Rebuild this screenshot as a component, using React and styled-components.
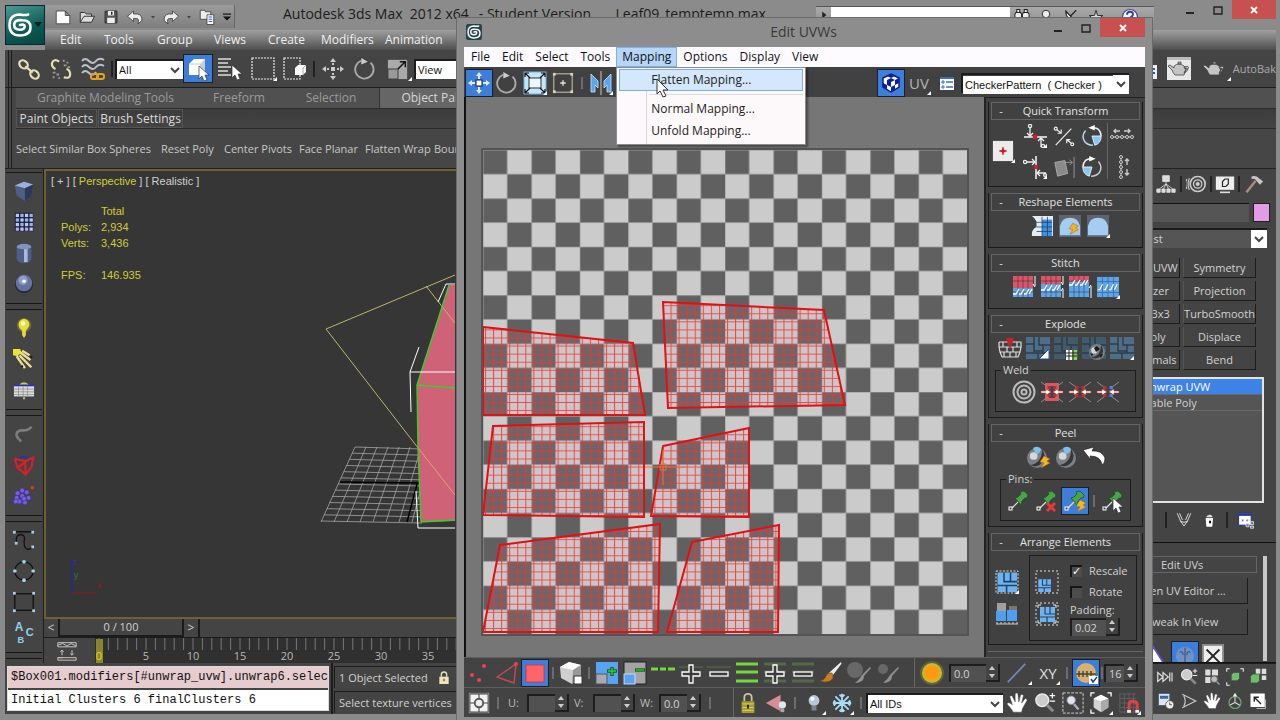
import React from "react";
import styled, { createGlobalStyle, css } from "styled-components";

const GlobalStyle = createGlobalStyle`
    * {
        box-sizing: border-box;
    }

    body {
        margin: 0;
        overflow: hidden;
        background: #8b8b8b;
        font-family: "Open Sans", "Noto Sans", sans-serif;
        font-size: 12px;
        line-height: 16px;
        color: #d2d2d2;
    }

    button, input, select {
        font: inherit;
        color: inherit;
        margin: 0;
        padding: 0;
        border: none;
        border-radius: 0;
        background: none;
    }
`;

/* ---------- drawings ---------- */

const tile = (x, y, s, c) => <rect x={x} y={y} width={s} height={s} fill={c} />;

const stitchRows = (top, split) => <>
    <rect x="1" y="1" width="20" height={split} fill="#d8566a" />
    <rect x="1" y={1 + split} width="20" height={21 - split} fill="#5fa4e6" />
    <path d="M1 6H21M1 17H21M6 1V22M11 1V22M16 1V22" stroke="#00000055" fill="none" />
    <path d={`M1 ${top + 6}h3l3-5M7 ${top + 6}h2l3-5M12 ${top + 6}h2l3-5M17 ${top + 6}l3-5`} stroke="#fff" strokeWidth="1.3" fill="none" />
</>;

const bricks = c => <>
    <rect x="0" y="1" width="24" height="22" fill={c} />
    <path d="M8 1V15H17M13 1V9H24M17 9V17M0 17H24M8 8H0M12 17V23" stroke="#2c3c48" strokeWidth="1.4" fill="none" />
</>;

const elements = <>
    <rect x="5" y="5" width="15" height="15" fill="#6fb3ee" />
    <path d="M10 5V12H20M15 5V12M5 15H20M12 15V20" stroke="#1d4468" strokeWidth="1.2" fill="none" />
</>;

const ball = (cx, cy, r) => <>
    <circle cx={cx} cy={cy} r={r} fill="#7c8084" />
    <path d={`M${cx + r * .5} ${cy - r * .86}A${r} ${r} 0 0 1 ${cx - r * .7} ${cy + r * .7}Q${cx + r * .5} ${cy + r * .5} ${cx + r * .5} ${cy - r * .86}`} fill="#33363a" />
    <circle cx={cx - r / 3} cy={cy - r / 5} r={r / 2.6} fill="#d4d8dc" />
</>;

const bolt = (x, y) => <path transform={`translate(${x} ${y})`} d="M5 0L11 3L8 5L11 7L2 12L5 7L1 6Z" fill="#f2b42c" stroke="#a8690c" strokeWidth=".6" />;

const pin = <>
    <path d="M5 19L12 12" stroke="#ddd" strokeWidth="1.2" />
    <path d="M8 9L11 8L14 5L13 3L17 2L21 6L20 9L18 9L15 12L14 16Z" fill="#49a349" stroke="#1c541c" strokeWidth=".8" />
    <rect x="2" y="18" width="3" height="3" fill="#444" stroke="#fff" />
</>;

const pointer = (x, y) => <path transform={`translate(${x} ${y})`} d="M0 0V13L3 10L5 15L8 14L6 9H10Z" fill="#fff" stroke="#333" strokeWidth=".7" />;

const weldArrows = c => <>
    <path d="M1 2L8 7V17L1 22M23 2L16 7V17L23 22" stroke="#8b8b8b" fill="none" />
    <path d="M9 6V18" stroke="#d8232f" strokeWidth="3" strokeDasharray="3 1" />
    <path d="M15 6V18" stroke={c} strokeWidth="3" strokeDasharray="3 1" />
    <path d="M1 11H6V9L11 12L6 15V13H1ZM23 11H18V9L13 12L18 15V13H23Z" fill="#fff" stroke="#a33" strokeWidth=".6" />
</>;

const plusBox = <path d="M10 4h4v7h7v4h-7v7h-4v-7H3v-4h7z" fill="#3c3c3c" stroke="#fff" strokeWidth="1.3" />;
const minusBox = <rect x="3" y="11" width="18" height="4" fill="#3c3c3c" stroke="#fff" strokeWidth="1.3" />;

const teapot = <path d="M7 9Q12 5 17 9Q20 12 17 18H8Q6 16 5 13L1 9L3 8L7 11ZM11 5h3v2h-3zM17 10Q23 8 21 12Q20 15 17 16L18 14Q21 12 20 11L18 12Z" fill="#c4c4c4" stroke="#444" strokeWidth=".8" />;

const blob = (x, y, r, c) => <circle cx={x} cy={y} r={r} fill={c} />;

const glyphs = {
    swirl: <path d="M19 3Q16 4 12 3Q3 3 3 12Q3 21 12 21Q21 21 21 14Q21 8 14 8Q7 7 7 12Q7 16 12 16Q16 16 16 13Q16 11 12 12" fill="none" stroke="#fff" strokeWidth="2.2" strokeLinecap="round" />,
    page: <path d="M3 4H15L21 10V21H3ZM15 4V10H21" fill="#fff" stroke="#333" />,
    folder: <path d="M3 19V6H9L11 8H18V11M3 19L8 11H22L18 19Z" fill="#ddd" stroke="#333" strokeWidth="1.3" />,
    save: <><path d="M4 4H20V20H4Z" fill="#555" stroke="#222" /><path d="M8 4h8v6H8zM7 13h10v7H7z" fill="#eee" /><path d="M13 5v4" stroke="#222" strokeWidth="2" /></>,
    undo: <path d="M2 11L10 4V8H15Q22 9 21 17L16 21Q18 14 14 14H10V18Z" fill="#eee" stroke="#333" />,
    redo: <path d="M22 11L14 4V8H9Q2 9 3 17L8 21Q6 14 10 14H14V18Z" fill="#eee" stroke="#333" />,
    project: <><path d="M3 3H9L10 5H17V15H3Z" fill="#eee" stroke="#333" /><path d="M12 9H21V22H12Z" fill="#fff" stroke="#333" /><path d="M14 12h5M14 15h5M14 18h5" stroke="#2f6fc0" strokeWidth="1.5" /></>,
    caret: <path d="M8 10H16L12 15Z" fill="#444" />,
    caretRight: <path d="M9 6L16 12L9 18Z" fill="#222" />,
    caretBar: <><path d="M5 7H19" stroke="#111" strokeWidth="2" /><path d="M5 11H19L12 18Z" fill="#111" /></>,
    link: <g fill="none" stroke="#e6dfb6" strokeWidth="2.4"><ellipse cx="6" cy="7" rx="5" ry="4" transform="rotate(40 6 7)" /><path d="M8 9L16 16" /><ellipse cx="18" cy="18" rx="5" ry="4" transform="rotate(40 18 18)" /></g>,
    unlink: <><g fill="none" stroke="#e6dfb6" strokeWidth="2.4"><path d="M10 4Q4 0 2 6Q2 10 6 12" /><path d="M15 21Q22 23 22 18Q22 13 18 12" /></g><path d="M14 3h2M18 5h2M15 8h3M19 10h3M3 16h3M7 18h3M3 21h2M9 22h2" stroke="#999" strokeWidth="2" /></>,
    bind: <><path d="M1 4Q4 0 8 4T15 4T23 3M1 10Q4 6 8 10T15 10T23 9M1 16Q4 12 8 16T15 15" fill="none" stroke="#b9c1cc" strokeWidth="2" /><g fill="none" stroke="#e5a21c" strokeWidth="2"><rect x="10" y="17" width="7" height="5" rx="2" /><rect x="16" y="17" width="7" height="5" rx="2" /></g></>,
    selectObject: <><path d="M3 7L8 2H19V13L14 18H3Z" fill="#fff" /><path d="M14 18V7L19 2V13Z" fill="#ccd" /><path d="M3 7H14" stroke="#ccd" />{pointer(13, 9)}</>,
    selectName: <><path d="M0 2H13M0 6H10M0 10H13M0 14H10M0 18H13" stroke="#ddd" strokeWidth="1.6" />{pointer(14, 8)}</>,
    region: <rect x="1" y="1" width="22" height="21" fill="none" stroke="#eee" strokeDasharray="2 1" strokeWidth="1.2" />,
    windowRegion: <><rect x="1" y="1" width="16" height="21" fill="none" stroke="#eee" strokeDasharray="2 1" strokeWidth="1.2" /><path d="M12 11L15 8H23V15L20 18H12Z" fill="#fff" /><path d="M20 18V11L23 8" stroke="#aaa" fill="none" /></>,
    move: <path d="M12 1L15 5H9ZM12 23L15 19H9ZM1 12L5 9V15ZM23 12L19 9V15ZM10 10h4v4h-4zM11 6h2v2h-2zM11 16h2v2h-2zM6 11h2v2H6zM16 11h2v2h-2z" fill="#ccc" />,
    rotate: <><path d="M18 5A10 10 0 1 1 8 3" fill="none" stroke="#aaa" strokeWidth="2" /><path d="M8 0L15 4L8 7Z" fill="#ccc" /></>,
    scale: <><path d="M1 2H22V23H1Z" fill="#aaa" /><path d="M1 12H12V23H1Z" fill="#999" stroke="#333" /><path d="M12 12L19 5M14 4H20V10" fill="none" stroke="#111" strokeWidth="1.6" /></>,
    teapot,
    teapotFrame: <><rect x="0" y="0" width="24" height="23" fill="#e8e8e8" /><rect x="0" y="0" width="24" height="3" fill="#bbb" />{teapot}</>,
    renderSetup: <><path d="M3 3Q9 0 12 4" stroke="#bbb" strokeWidth="2" fill="none" /><rect x="8" y="8" width="14" height="14" fill="#eee" /><path d="M10 12h10M10 16h10" stroke="#2a5ca8" strokeWidth="2" /></>,
    /* create tools */
    box: <><path d="M2 6L12 2L22 5L20 18L13 23L4 17Z" fill="#4d5f86" /><path d="M2 6L12 2L22 5L13 9Z" fill="#9cb0da" /><path d="M13 9L22 5L20 18L13 23Z" fill="#2b3858" /></>,
    lattice: <><rect x="2" y="2" width="20" height="20" fill="#161c3c" />{[0, 1, 2, 3].map(r => [0, 1, 2, 3].map(c => <rect key={r * 4 + c} x={3 + c * 5} y={3 + r * 5} width="3.6" height="3.6" fill={(r + c) % 2 ? "#9fb0e2" : "#bcc8f0"} />))}</>,
    cylinder: <><path d="M4 5V18Q5 23 12 23Q19 23 20 18V5Z" fill="#4d5f84" /><path d="M12 5H16V22H12Z" fill="#aab8d6" /><ellipse cx="12" cy="5" rx="8" ry="3" fill="#7f93be" /></>,
    sphere: <><circle cx="12" cy="12" r="10" fill="#252c48" /><circle cx="12" cy="11" r="9" fill="#6673a0" /><circle cx="11" cy="8" r="5" fill="#8f9cc6" /><circle cx="12" cy="9" r="2" fill="#fff" /></>,
    bulb: <><circle cx="12" cy="9" r="8" fill="#8c8a3c" opacity=".5" /><path d="M12 2Q18 3 18 9Q17 12 14 15V20L12 23L10 20V15Q6 12 6 9Q6 3 12 2Z" fill="#e8dc3c" /><circle cx="11" cy="7" r="2.5" fill="#fffcc0" /></>,
    sun: <><path d="M0 1H8L9 5L5 9L0 8Z" fill="#ece23a" /><path d="M8 5L19 13M7 8L20 21M4 9L13 22M10 3L18 8" stroke="#e8e090" strokeWidth="2.6" /><path d="M9 20h2M19 10h2" stroke="#111" strokeWidth="2" /></>,
    skylight: <><path d="M6 7Q12 0 18 7Z" fill="#c8cc50" /><path d="M1 7H23" stroke="#2c2cc8" strokeWidth="2" /><rect x="1" y="8" width="22" height="11" fill="#ddd" /><path d="M1 11H23M1 14H23M1 17H23M6 8V19M11 8V19M16 8V19" stroke="#888" strokeWidth=".8" /><path d="M12 20v2" stroke="#cc6" strokeWidth="2" /></>,
    hook: <path d="M20 4Q17 9 9 8Q3 9 4 14Q5 17 9 20" fill="none" stroke="#7c7c7c" strokeWidth="3" />,
    cage: <><circle cx="12" cy="11" r="8" fill="none" stroke="#2038a0" strokeWidth="2" /><path d="M2 5L13 8L22 4L20 14L14 22L13 8M2 5L5 15L14 22M5 15L17 6" fill="none" stroke="#d82020" strokeWidth="2.4" /></>,
    particles: <>{[[10, 6], [5, 9], [15, 8], [4, 14], [10, 12], [17, 14], [7, 18], [13, 19], [3, 18], [12, 15]].map(p => <circle key={p} cx={p[0]} cy={p[1]} r="2.6" fill="#7460e0" stroke="#3c2c98" strokeWidth=".6" />)}<circle cx="21" cy="3" r="2" fill="#d04020" /></>,
    spline: <><path d="M2 3H22M4 15Q2 6 9 6Q14 7 12 14Q12 23 18 22L22 19" fill="none" stroke="#111" strokeWidth="1.4" />{tile(0, 2, 3, "#9cd0e8")}{tile(20, 2, 3, "#9cd0e8")}{tile(2, 14, 3, "#9cd0e8")}{tile(20, 18, 3, "#9cd0e8")}</>,
    circle: <><circle cx="12" cy="12" r="10" fill="none" stroke="#111" strokeWidth="1.4" />{blob(12, 2, 2, "#9cd8ee")}{blob(12, 22, 2, "#9cd8ee")}{blob(2, 12, 2, "#9cd8ee")}{blob(22, 12, 2, "#9cd8ee")}</>,
    rect: <><rect x="2" y="3" width="20" height="18" fill="none" stroke="#111" strokeWidth="1.4" />{tile(0, 1, 3, "#9cd8ee")}{tile(21, 1, 3, "#9cd8ee")}{tile(0, 20, 3, "#9cd8ee")}{tile(21, 20, 3, "#9cd8ee")}</>,
    letters: <g fill="#8fd2ee" fontFamily="Liberation Sans" fontWeight="700"><text x="2" y="10" fontSize="13">A</text><text x="14" y="15" fontSize="12">C</text><text x="5" y="23" fontSize="10">B</text></g>,
    trackBar: <g fill="none" stroke="#c4c4c4" strokeWidth="1.2"><path d="M1 2H23V7H1ZM1 5L7 3L12 6L17 3L23 6M1 20H23V23H1ZM1 20H7M6 17V11L4 13M6 11L8 13M18 11V17L16 15M18 17L20 15" /></g>,
    lock: <><path d="M8 10V7Q8 3 12 3Q16 3 16 7V10" fill="none" stroke="#e6e0c0" strokeWidth="2" /><rect x="5" y="10" width="14" height="11" fill="#f0e4b8" /><path d="M12 13v4" stroke="#555" strokeWidth="2" /></>,
    padlock: <><path d="M8 10V6Q8 2 12 2Q16 2 16 6V10" fill="none" stroke="#c4c69a" strokeWidth="2" /><rect x="5" y="10" width="14" height="13" rx="1" fill="#a89a2c" /><path d="M6 13H18M6 17H18M6 20H18" stroke="#e0d878" /><path d="M12 14v4" stroke="#222" strokeWidth="2" /></>,
    /* unwrap toolbar */
    uvMove: <><path d="M12 1L15 5H13V8H11V5H9ZM12 23L15 19H13V16H11V19H9ZM1 12L5 9V11H8V13H5V15ZM23 12L19 9V11H16V13H19V15Z" fill="#dceaff" /><rect x="9" y="9" width="6" height="6" fill="#fff" stroke="#123" /></>,
    uvScale: <><rect x="1" y="1" width="22" height="22" fill="#c4e6fa" stroke="#71b3e4" /><rect x="6" y="7" width="12" height="10" fill="#eef6fc" stroke="#333" /><path d="M2 2L7 7M22 2L17 7M2 22L7 17M22 22L17 17M2 6V2H6M18 2H22V6M2 18V22H6M18 22H22V18" stroke="#111" fill="none" strokeWidth="1.2" /></>,
    uvFree: <><rect x="2" y="2" width="20" height="20" fill="none" stroke="#ddd4b4" />{tile(1, 1, 3, "#ddd4b4")}{tile(20, 1, 3, "#ddd4b4")}{tile(1, 20, 3, "#ddd4b4")}{tile(20, 20, 3, "#ddd4b4")}<path d="M12 9V15M9 12H15" stroke="#ddd" strokeWidth="1.5" /></>,
    mirror: <><path d="M2 21V3L9 10V17L6 14V21ZM22 21V3L15 10V17L18 14V21Z" fill="#59a6ee" stroke="#cde4f8" strokeWidth=".8" /><path d="M12 0V24" stroke="#d8c8b0" /></>,
    checkerCube: <><path d="M12 3L20 7V16L12 21L4 16V7Z" fill="#fff" stroke="#001a80" strokeWidth="1.4" /><path d="M12 3L16 5L12 7L8 5ZM8 9L12 11V16L8 14ZM4 12L8 14V18L4 16ZM16 9L20 7V12L16 14ZM12 16L16 14V19L12 21ZM12 7L16 9L12 11L8 9Z" fill="#0a1fa0" /></>,
    list: <><rect x="5" y="6" width="14" height="13" fill="#fff" /><path d="M5 7H19" stroke="#3472b8" strokeWidth="2" /><path d="M11 11H18M11 16H18" stroke="#3472b8" strokeWidth="1.6" /><path d="M7 10h2v2H7zM7 15h2v2H7z" fill="none" stroke="#3472b8" /></>,
    pivot: <><rect x="1" y="1" width="22" height="22" fill="#ececec" /><path d="M12 8V16M8 12H16" stroke="#d01020" strokeWidth="1.6" /><circle cx="12" cy="12" r="2" fill="#d01020" /></>,
    alignH: <><path d="M1 13H24" stroke="#eee" strokeWidth="1.6" /><g fill="none" stroke="#eee" strokeWidth="1.3"><path d="M7 4V11M4 9L7 12L10 9M18 23V15M15 17L18 14L21 17" /><circle cx="7" cy="2" r="1.6" /><circle cx="20" cy="22" r="1.6" /></g><circle cx="12" cy="13" r="2.4" fill="#d02030" /></>,
    alignV: <><path d="M13 1V24" stroke="#eee" strokeWidth="1.6" /><g fill="none" stroke="#eee" strokeWidth="1.3"><path d="M4 7H11M9 4L12 7L9 10M23 18H15M17 15L14 18L17 21" /><circle cx="2" cy="7" r="1.6" /><circle cx="22" cy="20" r="1.4" /></g><circle cx="13" cy="12" r="2.2" fill="#d02030" /></>,
    alignEdge: <g fill="none" stroke="#eee" strokeWidth="1.3"><path d="M3 22L20 4M4 5L9 9M9 5V9H5M20 20L15 16M15 20V16H19" /><circle cx="3" cy="4" r="1.6" /><circle cx="21" cy="21" r="1.6" /></g>,
    straighten: <><path d="M2 7L13 5L16 19L5 22Z" fill="#8a8a8a" stroke="#aaa" /><path d="M12 7H21M18 4L21 7L18 10M23 1V24" stroke="#999" fill="none" /></>,
    turnCw: <><path d="M5 6Q0 12 4 18Q7 22 13 22" fill="none" stroke="#bcd8f0" strokeWidth="1.6" /><path d="M12 3Q21 2 22 12" fill="none" stroke="#eee" strokeWidth="1.6" /><path d="M8 3L15 0V6Z" fill="#fff" /><path d="M12 12H22Q22 20 15 22Z" fill="#8cc6f0" stroke="#e8f4fc" /></>,
    turnCcw: <><path d="M19 6Q24 12 20 18Q17 22 11 22" fill="none" stroke="#ccc" strokeWidth="1.6" /><path d="M12 3Q3 2 2 12" fill="none" stroke="#eee" strokeWidth="1.6" /><path d="M16 3L9 0V6Z" fill="#fff" /><path d="M12 12H2Q2 20 9 22Z" fill="#8cc6f0" stroke="#e8f4fc" /></>,
    spaceH: <g fill="none" stroke="#ccc"><path d="M4 7H10M6 5L4 7L6 9M20 7H14M18 5L20 7L18 9" strokeWidth="1.4" /><path d="M1 13h22" /><g fill="#444"><circle cx="2" cy="13" r="1.5" /><circle cx="7" cy="13" r="1.5" /><circle cx="12" cy="13" r="1.5" /><circle cx="17" cy="13" r="1.5" /><circle cx="22" cy="13" r="1.5" /></g></g>,
    spaceV: <g fill="none" stroke="#ccc"><path d="M17 10V4M15 6L17 4L19 6M17 14V20M15 18L17 20L19 18" strokeWidth="1.4" /><path d="M11 1v22" /><g fill="#444"><circle cx="11" cy="2" r="1.5" /><circle cx="11" cy="7" r="1.5" /><circle cx="11" cy="12" r="1.5" /><circle cx="11" cy="17" r="1.5" /><circle cx="11" cy="22" r="1.5" /></g></g>,
    straightenSel: <><path d="M2 1H24V23H1Q0 16 6 13V7Q4 3 1 1Z" fill="#e6ecf0" /><path d="M12 5H23V23H12Z" fill="#3f8fe4" /><path d="M6 8H23M6 13H23M6 18H23M12 2V23M18 2V23" stroke="#1c3c60" strokeWidth=".8" /></>,
    relax: <><rect width="24" height="24" fill="#5c6470" /><path d="M1 22V12Q3 3 12 3Q21 3 23 12V22Z" fill="#a4cdf4" />{bolt(10, 9)}</>,
    relaxDialog: <><rect width="24" height="24" fill="#5c6470" /><path d="M1 22V12Q3 3 12 3Q21 3 23 12V22Z" fill="#a4cdf4" /></>,
    stitchTarget: <>{stitchRows(13, 12)}<path d="M23 1V11M21 9L23 12" stroke="#fff" fill="none" /></>,
    stitchAverage: <>{stitchRows(9, 8)}<path d="M23 1V9M21 7L23 10M23 23V14M21 16L23 13" stroke="#fff" fill="none" /></>,
    stitchSource: <>{stitchRows(4, 6)}<path d="M23 23V11M21 13L23 10" stroke="#fff" fill="none" /></>,
    stitchCustom: <><rect x="0" y="1" width="24" height="22" fill="#5fa4e6" /><path d="M0 6H24M0 18H24M6 1V23M12 1V23M18 1V23" stroke="#3474b4" /><path d="M1 15h2l3-6M7 15h2l3-6M13 15h2l3-6M19 15l3-6" stroke="#fff" strokeWidth="1.3" fill="none" /></>,
    breakWall: <><path d="M1 6H23V11H1M1 11L2 16H22L23 11M2 16L4 21H20L22 16M5 6V11M9 11V16M15 11V16M12 16V21M19 6V11M6 16V21M18 16V21M1 6V11" stroke="#ddd" strokeWidth="1.2" fill="none" /><path d="M8 2H16L14 8L12 13L10 8Z" fill="#c8202c" /></>,
    flatPoly: <>{bricks("#4e6d86")}<path d="M13 23L23 13V23Z" fill="#fff" stroke="#1f48a0" /></>,
    flatSmooth: <>{bricks("#43596c")}<rect x="12" y="14" width="11" height="10" fill="#fff" /><rect x="18" y="14" width="5" height="10" fill="#8cd060" /><path d="M12 17H23M12 20H23M15 14V24M19 14V24" stroke="#222" /></>,
    flatMat: <>{bricks("#43596c")}{ball(15, 16, 8)}<path d="M12 12l3-2 3 3-4 3zM17 19l4-1-2 4zM8 17l3 1-1 3z" fill="#1c1c1c" /></>,
    flatCustom: bricks("#4e6d86"),
    target: <g fill="none" stroke="#bbb"><circle cx="12" cy="12" r="10.5" strokeWidth="2" /><circle cx="12" cy="12" r="6.5" strokeWidth="2" /><circle cx="12" cy="12" r="2.5" strokeWidth="2" /></g>,
    weldSel: <><path d="M5 3H19V21H5Z" fill="#d85860" /><rect x="9" y="6" width="6" height="12" fill="#444" />{weldArrows("#d8232f")}</>,
    weldAll: weldArrows("#d8232f"),
    weldPick: weldArrows("#3c88e8"),
    quickPeel: <>{ball(11, 13, 10)}<path d="M7 3Q12 0 15 4Q14 9 10 9Z" fill="#7cc0f0" />{bolt(13, 11)}</>,
    peelMode: <>{ball(12, 13, 10)}<path d="M9 3Q14 0 17 4Q16 9 11 9Z" fill="#7cc0f0" /></>,
    resetPeel: <path d="M1 5L12 2L10 6Q20 5 23 13Q23 18 20 20Q19 11 8 11L9 15Z" fill="#fff" stroke="#111" strokeWidth=".6" />,
    pin,
    unpin: <>{pin}<path d="M12 14L20 22M20 14L12 22" stroke="#e8383c" strokeWidth="3" /></>,
    autoPin: <>{pin}{bolt(12, 11)}</>,
    pinCursor: <>{pin}{pointer(12, 9)}</>,
    packCustom: <><rect x="1" y="1" width="22" height="22" fill="none" stroke="#ddd" strokeDasharray="2 1.5" /><g transform="translate(-4 -4) scale(1.3)">{elements}</g></>,
    packFull: <><rect x="2" y="1" width="9" height="9" fill="#a0a0a0" /><rect x="14" y="4" width="8" height="6" fill="#777" /><rect x="1" y="9" width="10" height="10" fill="#4f9ef0" /><rect x="12" y="8" width="10" height="11" fill="#4f9ef0" /><path d="M1 22H23M2 20v2M6 20v2M10 20v2M14 20v2M18 20v2M22 20v2" stroke="#ccc" /></>,
    packTogether: <><rect x="1" y="1" width="22" height="22" fill="none" stroke="#ddd" strokeDasharray="2 2" /><g transform="translate(-1 5) scale(.85)">{elements}</g></>,
    packFit: <><rect x="1" y="1" width="22" height="22" fill="none" stroke="#ddd" strokeDasharray="2 2" />{elements}<path d="M3 6V3H6M18 3H21V6M3 18V21H6M18 21H21V18" stroke="#eee" fill="none" /></>,
    /* selection bar */
    vertex: <>{blob(5, 14, 2, "#f04058")}{blob(17, 5, 2, "#f04058")}{blob(12, 19, 2, "#f04058")}</>,
    edge: <><path d="M2 16L21 3L19 22Z" fill="none" stroke="#c04858" strokeWidth="1.5" />{blob(21, 3, 2, "#f04058")}</>,
    polygon: <rect x="3" y="4" width="18" height="17" fill="#ff6468" stroke="#d83848" />,
    cubeFlat: <><path d="M1 6L10 1L22 4V15L13 23L2 17Z" fill="#d0d0d0" /><path d="M1 6L10 1L22 4L14 9Z" fill="#fff" /><path d="M14 9L22 4V15L13 23Z" fill="#999" /><rect x="15" y="15" width="8" height="8" fill="#fff" stroke="#333" /></>,
    growSel: <><rect x="1" y="1" width="22" height="22" fill="#5aa2f4" /><rect x="1" y="13" width="11" height="10" fill="#aaa" stroke="#556" /><path d="M17 6V15M12 10H22" stroke="#0c6c0c" strokeWidth="3.4" /><path d="M17 7V14M13 10H21" stroke="#3cc83c" strokeWidth="1.4" /></>,
    shrinkSel: <><rect x="1" y="1" width="22" height="22" fill="#a4a4a4" stroke="#222" /><rect x="1" y="13" width="11" height="10" fill="#5aa2f4" stroke="#cde" /><path d="M12 9H22" stroke="#0c6c0c" strokeWidth="3.4" /><path d="M13 9H21" stroke="#3cc83c" strokeWidth="1.2" /></>,
    loop: <path d="M0 8H7M9 8H15M17 8H24" stroke="#74d83c" strokeWidth="3" />,
    loopGrow: <><path d="M0 6H24" stroke="#4c5c44" strokeWidth="2" />{plusBox}</>,
    loopShrink: <><path d="M0 6H24" stroke="#4c5c44" strokeWidth="2" />{minusBox}</>,
    ring: <path d="M1 3H23M1 11H23M1 20H23" stroke="#74d83c" strokeWidth="3" />,
    ringGrow: <><path d="M1 3H23M1 11H23M1 20H23" stroke="#54684a" strokeWidth="3" />{plusBox}</>,
    ringShrink: <><path d="M1 3H23M1 11H23M1 20H23" stroke="#54684a" strokeWidth="3" />{minusBox}</>,
    brush: <><path d="M22 2L13 14L11 12Z" fill="#ddd" stroke="#eee" strokeWidth="1.6" /><path d="M13 12Q16 17 11 20Q6 22 1 20Q6 19 7 15Q9 11 13 12Z" fill="#c87c24" stroke="#7c4810" strokeWidth=".6" /></>,
    brushBig: <><circle cx="8" cy="9" r="8" fill="#686868" /><path d="M24 7L17 15Q17 22 8 22Q13 18 15 14L23 6Z" fill="#909090" /></>,
    brushSmall: <><circle cx="8" cy="8" r="5" fill="#686868" /><path d="M24 7L17 15Q17 22 8 22Q13 18 15 14L23 6Z" fill="#909090" /></>,
    softSun: <><circle cx="12" cy="12" r="12" fill="#6c7030" opacity=".7" /><circle cx="12" cy="12" r="10" fill="#d0b42c" /><circle cx="12" cy="12" r="7" fill="#ff9a10" /></>,
    slash: <path d="M2 22L21 2" stroke="#7484b8" strokeWidth="2" />,
    ruler: <><circle cx="12" cy="12" r="10" fill="#d8b070" /><path d="M2 13H22M5 10v6M9 10v6M13 10v6M17 10v6" stroke="#443" strokeWidth="1.4" /><rect x="15" y="15" width="9" height="8" fill="#fff" /><path d="M17 18L19 21L23 16" stroke="#123c80" fill="none" strokeWidth="1.4" /></>,
    absolute: <><rect x="1" y="1" width="22" height="22" fill="#f2f2f2" /><path d="M12 2V7M12 17V22M2 12H7M17 12H22M2 2H22V22H2Z" stroke="#444" strokeWidth="1.2" fill="none" /><circle cx="12" cy="12" r="4.6" fill="#eee" stroke="#555" strokeWidth="2" /></>,
    hide: <><path d="M1 12L17 3V21Z" fill="#d88c94" /><circle cx="19" cy="14" r="4" fill="#dde8f0" /><path d="M17 18h4v4h-4z" fill="#aaa" /></>,
    lamp: <><circle cx="12" cy="9" r="6.5" fill="#b8c8d8" /><circle cx="10" cy="7" r="2.4" fill="#fff" /><path d="M9 15h6v6H9z" fill="#7c8490" /></>,
    snow: <g stroke="#a8dcf8" strokeWidth="2.2" fill="none"><path d="M12 1V23M1 12H23M4 4L20 20M20 4L4 20M9 2L12 5L15 2M9 22L12 19L15 22M2 9L5 12L2 15M22 9L19 12L22 15" /></g>,
    hand: <path d="M8 22Q6 18 1 13Q2 11 4 12L7 14L4 5Q6 3 7 5L10 11L10 2Q12 0 13 2L14 11L16 3Q18 2 19 4L17 12L21 7Q23 7 23 9L18 18L17 22Z" fill="#fff" stroke="#444" strokeWidth=".5" />,
    zoom: <><circle cx="9" cy="9" r="7" fill="#ccc" stroke="#eee" strokeWidth="1.4" /><path d="M14 14L21 21" stroke="#888" strokeWidth="3.4" /><path d="M20 1V7M17 4H23M17 10H23" stroke="#fff" strokeWidth="1.2" /></>,
    zoomRegion: <><rect x="1" y="1" width="22" height="22" fill="none" stroke="#ddd" strokeDasharray="3 1.5" /><circle cx="10" cy="9" r="4.6" fill="#e0e4ec" stroke="#889" /><path d="M13 13L18 19" stroke="#aab" strokeWidth="2.6" /></>,
    zoomExtents: <><path d="M4 7L12 3L20 7V17L12 22L4 17Z" fill="#d4d4d4" /><path d="M4 7L12 3L20 7L12 10Z" fill="#fff" /><path d="M12 10L20 7V17L12 22Z" fill="#aaa" /><path d="M1 5V1H5M19 1H23V5M1 19V23H5" fill="none" stroke="#fff" strokeWidth="1.4" /></>,
    snap: <><path d="M2 2H20M2 7H20M2 12H20M2 17H20M2 22H20M2 2V22M7 2V22M12 2V22M17 2V22" stroke="#606870" strokeWidth=".8" /><path d="M12 22V15Q12 10 16 10Q21 10 21 15V22" fill="none" stroke="#e04040" strokeWidth="3.4" /><path d="M10 21h4M19 21h4" stroke="#fff" strokeWidth="3" /></>,
    /* command panel */
    hierarchy: <path d="M8 2H16V9H8ZM12 9V13M12 12L4 18M12 12L9 18M12 12L15 18M12 12L20 18M1 18h4v4H1zM7 18h4v4H7zM13 18h4v4h-4zM19 18h4v4h-4z" fill="#ddd" stroke="#ddd" />,
    motion: <g fill="none" stroke="#ccc"><circle cx="14" cy="12" r="9" strokeWidth="2" /><circle cx="14" cy="12" r="5" strokeWidth="1.6" /><circle cx="14" cy="12" r="2" fill="#ccc" /><path d="M4 5Q1 12 4 19M1 6Q-2 12 1 18" strokeWidth="1.4" /></g>,
    display: <><rect x="1" y="3" width="22" height="16" fill="#eee" /><path d="M9 9L12 6H16V12L13 15H9Z" fill="none" stroke="#222" strokeWidth="1.4" /><path d="M6 22H18" stroke="#ddd" strokeWidth="2" /></>,
    hammer: <><path d="M3 22L14 8" stroke="#b08880" strokeWidth="3" /><path d="M9 3Q14 1 18 5L23 9L19 13L14 7Q12 5 9 6Z" fill="#c8c8c8" /></>,
    unique: <path d="M3 3L8 15M21 3L16 15M6 3L10 12M18 3L14 12M8 14L12 20L16 14L12 15Z" fill="none" stroke="#ddd" strokeWidth="1.3" />,
    trash: <><path d="M7 9H18L17 22H8Z" fill="#fff" /><path d="M8 7Q12 2 17 6L17 8H8Z" fill="#ddd" /><path d="M12 13h3v4h-3z" fill="#111" /></>,
    configure: <><rect x="2" y="3" width="17" height="16" fill="#fff" stroke="#223c98" strokeWidth="1.6" /><path d="M2 5H19" stroke="#223c98" strokeWidth="3" /><path d="M6 11h3v3H6zM12 11h3v3h-3zM12 17h4v4h-4zM18 14h4v4h-4zM18 20h4v3h-4z" fill="#778" stroke="#eee" /></>,
    cone: <path d="M1 22L8 3L20 22Z" fill="#fff" stroke="#5c50d0" strokeWidth="2" />,
    brain: <><circle cx="12" cy="13" r="10" fill="#6c90c8" /><path d="M12 4V22M6 9Q10 7 10 12M18 9Q14 7 14 12" stroke="#345" fill="none" /></>,
    openX: <><rect x="1" y="1" width="22" height="22" fill="#eee" stroke="#888" strokeWidth="2" /><path d="M5 6L19 20M19 6L5 20" stroke="#222" strokeWidth="2" /></>,
    toEnd: <path d="M1 6V18L8 12ZM8 6V18L15 12ZM17 6V18M20 6V18" fill="none" stroke="#ddd" strokeWidth="1.6" />,
    zoomAll: <><path d="M3 2h7v8H3zM12 2h8v8h-8zM3 12h7v8H3z" fill="#ddd" /><circle cx="15" cy="15" r="4.4" fill="#bbb" stroke="#555" /><path d="M18 18L22 22" stroke="#999" strokeWidth="2" /></>,
    extents: <><path d="M7 9L10 6H18V14L15 17H7Z" fill="#74b874" stroke="#2c5c2c" /><path d="M1 5V1H5M19 1H23V5M1 19V23H5" fill="none" stroke="#eee" strokeWidth="1.4" /></>,
    extentsAll: <><path d="M9 1h6v7H9zM17 1h6v7h-6zM17 10h6v6h-6z" fill="#ddd" /><path d="M2 11L5 8H14V17L11 20H2Z" fill="#74b874" stroke="#2c5c2c" /></>,
    keyTime: <><path d="M2 2H17V18H2Z" fill="#dde6f0" stroke="#357" /><path d="M4 5h11v4H4z" fill="#3468a8" /><circle cx="17" cy="17" r="5.5" fill="#eee" stroke="#444" /><path d="M17 14V17H20" stroke="#222" fill="none" /></>,
    fov: <path d="M3 3L21 12L3 21M5 5Q9 12 5 19" fill="none" stroke="#ccc" strokeWidth="1.5" />,
    orbit: <><path d="M12 5V14L4 18M12 14L19 18" fill="none" stroke="#ddd" strokeWidth="1.4" /><circle cx="12" cy="14" r="8" fill="none" stroke="#6ca86c" strokeWidth="1.6" /><path d="M9 6L12 1L15 6Z" fill="#eee" /></>,
    maximize: <><rect x="2" y="2" width="19" height="18" fill="#fff" /><path d="M7 7L16 16M7 13V7H13" stroke="#222" strokeWidth="1.8" fill="none" /><path d="M22 10V22H10" fill="none" stroke="#ddd" /></>,
    binoculars: <g fill="#eee" stroke="#222" strokeWidth="1.4"><circle cx="7" cy="10" r="4.6" /><circle cx="17" cy="10" r="4.6" /><path d="M5 2h4v4H5zM15 2h4v4h-4z" /></g>,
    head: <g fill="#eee" stroke="#222" strokeWidth="1.2"><circle cx="12" cy="8" r="5" /><path d="M4 22Q5 14 12 14Q19 14 20 22Z" /></g>,
    dish: <path d="M5 4Q5 16 18 18ZM11 11L19 3" fill="#fff" stroke="#222" strokeWidth="1.6" />,
    star: <path d="M12 3L14 10H21L16 14L18 21L12 17L6 21L8 14L3 10H10Z" fill="#ddd" stroke="#222" strokeWidth="1.2" />,
    help: <><circle cx="12" cy="12" r="10" fill="#f0f4ff" stroke="#3c4c84" strokeWidth="1.6" /><path d="M8 9Q8 5 12 5Q16 5 16 8Q16 11 12 13V15M12 17V19" stroke="#2440a0" strokeWidth="2.4" fill="none" /></>,
};

function Icon({ name, size = 24 }) {
    return <svg width={size} height={size} viewBox="0 0 24 24" aria-hidden="true">{glyphs[name]}</svg>;
}

/* ---------- shared controls ---------- */

const Tool = styled.button`
    position: relative;
    flex: none;
    display: flex;
    align-items: center;
    justify-content: center;
    width: ${p => p.$w || 28}px;
    height: ${p => p.$h || 28}px;
    color: #b4b4b4;
    ${p => p.$on && css`
        background: #3d7edb;
        border: 1px solid #1b1f28;
    `}
    ${p => p.$flyout && css`
        &::after {
            content: "";
            position: absolute;
            right: 2px;
            bottom: 2px;
            border: solid transparent;
            border-width: 2px;
            border-right-color: #fff;
            border-bottom-color: #fff;
        }
    `}
`;

function IconTool({ name, size, w, h, on, flyout }) {
    return <Tool type="button" aria-label={name} $w={w} $h={h} $on={on} $flyout={flyout}>
        <Icon name={name} size={size} />
    </Tool>;
}

const Divider = styled.span`
    flex: none;
    width: 2px;
    height: ${p => p.$dark ? 16 : 12}px;
    margin: 0 ${p => p.$gap || 3}px;
    background: ${p => p.$dark ? "#222" : "#6c6c6c"};
`;

const SelectWrap = styled.div`
    position: relative;
    flex: none;
    width: ${p => p.$w}px;
    height: 20px;
    border: solid #1c1c1c;
    border-width: 2px 0 0 2px;

    select {
        width: 100%;
        height: 100%;
        padding-left: 2px;
        appearance: none;
        background: ${p => p.$dark ? "#555" : "#fff"};
        color: ${p => p.$dark ? "#d2d2d2" : "#111"};
        font-size: 11px;
        ${p => p.$sans && css`font-family: "Liberation Sans", sans-serif;`}
    }

    svg {
        position: absolute;
        right: 0;
        top: 0;
        width: 16px;
        height: 100%;
        padding: 4px 3px;
        background: #fff;
        pointer-events: none;
    }
`;

function DropDown({ label, value, ...look }) {
    return <SelectWrap {...look}>
        <select aria-label={label} defaultValue={value}><option>{value}</option></select>
        <svg viewBox="0 0 10 8" aria-hidden="true"><path d="M1 2L5 6L9 2" fill="none" stroke="#444" strokeWidth="2" /></svg>
    </SelectWrap>;
}

const SpinWrap = styled.span`
    display: flex;
    flex: none;
    height: 18px;

    input {
        width: ${p => p.$w}px;
        padding-left: 3px;
        background: #515151;
        border: solid #1e1e1e;
        border-width: 2px 0 0 2px;
        font-size: 11px;
    }

    svg {
        width: 14px;
        height: 18px;
        border: solid #1e1e1e;
        border-width: 0 2px 2px 0;
    }
`;

function Spinner({ label, value, w, id }) {
    return <SpinWrap $w={w}>
        <input id={id} aria-label={label} defaultValue={value} />
        <svg viewBox="0 0 12 16" aria-hidden="true"><path d="M3 6L6 2L9 6ZM3 10L6 14L9 10Z" fill="#ccc" /></svg>
    </SpinWrap>;
}

/* ---------- main window ---------- */

const grip = "linear-gradient(90deg, transparent 3px, #1c1c1c 3px 4px, transparent 4px 6px, #1c1c1c 6px 7px, transparent 7px)";

const MainWindow = styled.div`
    display: flex;
    flex-direction: column;
    height: 100vh;
    padding: 0 4px 6px 5px;
    background: #8b8b8b;
`;

const Caption = styled.header`
    display: grid;
    grid-template-columns: 40px 1fr;
    grid-template-rows: 30px 20px;
`;

const AppButton = styled.button`
    grid-row: 1 / 3;
    align-self: start;
    height: 40px;
    margin-top: 5px;
    display: flex;
    align-items: center;
    border: 1px solid #123;
    background: linear-gradient(160deg, #4c9a94, #0c5a54 60%, #064640);
`;

const TitleRow = styled.div`
    display: flex;
    align-items: flex-start;
    min-width: 0;
`;

const QuickAccess = styled.div`
    display: flex;
    align-items: center;
    width: 190px;
    height: 23px;
    margin-top: 5px;
    padding-left: 5px;
    background: linear-gradient(#9c9c9c, #7e7e7e);
    border-right: 1px solid #666;
`;

const MainTitle = styled.h1`
    display: flex;
    gap: 10px;
    width: 533px;
    margin: 4px 0 0 48px;
    font-weight: 400;
    font-size: 14px;
    line-height: 20px;
    color: #1c1c1c;
    white-space: pre;
`;

const InfoCenter = styled.div`
    display: flex;
    width: 338px;
    height: 22px;
    margin-top: 6px;
    border-top: 1px solid #555;
    background: linear-gradient(#aaa, #8a8a8a);

    input {
        width: 179px;
        padding: 0 6px;
        background: #fff;
        font-size: 11px;
    }
`;

const WindowButtons = styled.div`
    display: flex;
    margin-left: auto;
    height: 19px;

    button {
        display: flex;
        align-items: center;
        justify-content: center;
        width: 28px;
        color: #222;
    }

    button:last-child {
        width: 44px;
        background: #c75050;
        color: #fff;
    }
`;

function CaptionButtons() {
    return <WindowButtons>
        <button type="button" aria-label="Minimize"><svg width="10" height="10"><path d="M1 8H9" stroke="currentColor" strokeWidth="2" /></svg></button>
        <button type="button" aria-label="Maximize"><svg width="10" height="10"><path d="M1 2H9V9H1Z" fill="none" stroke="currentColor" strokeWidth="1.4" /></svg></button>
        <button type="button" aria-label="Close"><svg width="8" height="8"><path d="M1 1L7 7M7 1L1 7" stroke="currentColor" strokeWidth="1.8" /></svg></button>
    </WindowButtons>;
}

const MainMenu = styled.nav`
    display: grid;
    grid-template-columns: 44px 53px 57px 54px 53px 64px 70px;
    padding-left: 15px;
    align-items: center;
    background: linear-gradient(#a0a0a0, #4e4e4e);

    button {
        text-align: left;
        color: #f0f0f0;
    }
`;

const MainToolbar = styled.div`
    display: flex;
    height: 38px;
    padding-left: 8px;
    background: ${grip} #444;
    border-bottom: 1px solid #1e1e1e;
    align-items: center;

    > :last-child {
        flex: none;
        font-size: 11px;
        white-space: nowrap;
        color: #aaa;
    }
`;

const ToolbarEnd = styled.div`
    display: flex;
    margin-left: auto;
`;

const RibbonTabs = styled.div`
    display: grid;
    grid-template-columns: 179px 88px 96px 112px 1fr;
    height: 21px;
    margin-left: 11px;
    background: #505050;
    border-bottom: 1px solid #2c2c2c;

    button {
        color: #9a9a9a;
    }

    button:nth-child(4) {
        background: #666;
        color: #d8d8d8;
        border-left: 1px solid #333;
    }
`;

const Ribbon = styled.div`
    background: ${grip} #464646;
`;

const RibbonPanels = styled.div`
    display: flex;
    gap: 1px;
    height: 20px;
    margin-left: 11px;
    background: linear-gradient(#3c3c3c, #444);
    border-bottom: 1px solid #2c2c2c;

    button {
        width: 81px;
        border: 1px solid #555;
        color: #dcdcdc;
        white-space: nowrap;
    }

    button + button {
        width: 85px;
    }
`;

const MacroBar = styled.div`
    display: grid;
    grid-template-columns: 71px 74px 63px 75px 66px 69px 60px;
    height: 39px;
    margin-left: 11px;

    button {
        text-align: left;
        font-size: 11px;
        color: #c8c8c8;
        white-space: nowrap;
    }
`;

const Workspace = styled.div`
    display: flex;
    flex: 1;
    min-height: 0;
    border-top: 1px solid #222;
`;

const LeftTools = styled.aside`
    display: flex;
    flex-direction: column;
    width: 39px;
    flex: none;
    gap: 5px;
    padding: 3px 1px 0;
    background: #444;
    border-right: 1px solid #1c1c1c;
`;

const ToolStack = styled.div`
    display: flex;
    flex-direction: column;
    align-items: center;
    padding: 2px 0 4px;
    border: solid #161616;
    border-width: 1px 0;
`;

const Center = styled.main`
    display: flex;
    flex-direction: column;
    flex: 1;
    min-width: 0;
`;

const Viewport = styled.section`
    position: relative;
    flex: 1;
    min-height: 0;
    padding: 2px 5px;
    background: #363636;
    border: 2px solid #6e6134;
    font-family: "Liberation Sans", sans-serif;
    font-size: 11px;
    color: #cfcfcf;
    overflow: hidden;

    em {
        font-style: normal;
        color: #d2cc38;
    }
`;

const Scene = styled.svg`
    position: absolute;
    left: 0;
    top: 0;
`;

const Stats = styled.table`
    margin: 14px 0 0 10px;
    border-collapse: collapse;
    color: #d2cc38;

    th, td {
        height: 16px;
        padding: 0;
        font-weight: 400;
        text-align: left;
    }

    th:first-child {
        width: 40px;
    }
`;

const TimeSlider = styled.div`
    display: flex;
    height: 18px;
    background: #444;

    button {
        width: 16px;
        line-height: 14px;
        border-right: 2px solid #1c1c1c;
    }

    button:nth-child(2) {
        width: 124px;
        border-bottom: 2px solid #1c1c1c;
        font-size: 11px;
    }
`;

const Track = styled.div`
    display: flex;
    align-items: center;
    height: 26px;
    padding-left: 13px;
    gap: 18px;
    background: #444;
    border-top: 1px solid #1c1c1c;
    overflow: hidden;

    > svg {
        flex: none;
    }
`;

const Footer = styled.footer`
    display: flex;
    height: 51px;
    background: #444;
`;

const Listener = styled.div`
    display: grid;
    width: 322px;
    margin: 3px 2px;
    gap: 2px;
    border: 1px solid #ddd;

    input {
        min-width: 0;
        width: 100%;
        padding-left: 3px;
        background: #fff;
        color: #111;
        font-family: "Liberation Mono", monospace;
    }

    input:first-child {
        background: #e6cbcf;
    }
`;

const Status = styled.div`
    width: 180px;
    padding-left: 1px;
    border-left: 2px solid #1c1c1c;
    font-size: 11px;
    white-space: nowrap;

    > div {
        display: flex;
        align-items: center;
        height: 22px;
        padding-left: 4px;
        margin-top: 3px;
        gap: 8px;
        border: solid #1c1c1c;
        border-width: 1px 0 0 1px;
    }
`;

const NavTools = styled.div`
    display: grid;
    grid-template-columns: repeat(5, 23px);
    grid-auto-rows: 24px;
    align-content: center;
    width: 126px;
    margin-left: auto;
    padding-left: 4px;
    border-top: 1px solid #1c1c1c;
`;

/* ---------- command panel ---------- */

const CommandPanel = styled.aside`
    display: flex;
    flex-direction: column;
    flex: none;
    width: 188px;
    background: #444;
    overflow: hidden;
`;

const PanelTabs = styled.div`
    display: flex;
    justify-content: flex-end;
    align-items: center;
    height: 30px;
    padding-right: 9px;
`;

const NameRow = styled.div`
    display: flex;
    gap: 4px;
    margin-top: 4px;
    padding: 0 6px 0 10px;

    input {
        flex: 1;
        min-width: 0;
        height: 19px;
        background: #555;
        border-top: 1px solid #111;
    }

    button {
        width: 17px;
        background: #e39be8;
        border: 1px solid #222;
    }
`;

const ListRow = styled.div`
    display: flex;
    justify-content: flex-end;
    padding: 6px 9px 10px;
`;

const ModifierButtons = styled.div`
    display: grid;
    grid-template-columns: 73px 73px;
    grid-auto-rows: 20px;
    gap: 3px;
    justify-content: end;
    padding-right: 20px;

    button {
        border: solid #1c1c1c;
        border-width: 0 1px 1px 0;
        border-left: 1px solid #555;
        font-size: 11px;
        white-space: nowrap;
    }
`;

const Stack = styled.ul`
    height: 126px;
    margin: 7px 12px 0 10px;
    padding: 0;
    background: #555;
    border: 2px solid #e4e4e4;
    list-style: none;
    font-size: 11px;

    li {
        height: 16px;
        padding-left: 31px;
        border-bottom: 1px solid #6a6a6a;
        line-height: 15px;
    }

    li:first-child {
        padding-left: 42px;
        background: #3d82e8;
        color: #fff;
    }
`;

const StackTools = styled.div`
    display: flex;
    justify-content: flex-end;
    align-items: center;
    height: 32px;
    margin-top: 1px;
    padding-right: 18px;
    gap: 3px;
`;

const EditRollout = styled.section`
    display: flex;
    flex-direction: column;
    flex: 1;
    min-height: 0;
    margin-top: 6px;
    padding: 13px 9px 0 10px;
    border-top: 1px solid #111;
    border-bottom: 1px solid #111;
    overflow: hidden;

    h2 {
        height: 17px;
        margin: 0 6px 5px 0;
        padding-left: 62px;
        border: 1px solid #666;
        font-weight: 400;
        font-size: 11px;
        line-height: 15px;
    }
`;

const WideButton = styled.button`
    flex: none;
    height: 26px;
    margin: 0 15px 5px 0;
    border: solid #1c1c1c;
    border-width: 0 1px 1px 0;
    font-size: 11px;
    text-align: left;
    padding-left: ${p => p.$indent}px;
`;

const ScrollBox = styled.div`
    display: flex;
    flex-direction: column;
    border-right: 4px solid #c8c8c8;
    height: 105px;
`;

/* ---------- unwrap window ---------- */

const UvWindow = styled.section`
    position: absolute;
    left: 456px;
    right: 127px;
    top: 17px;
    bottom: 0;
    display: flex;
    flex-direction: column;
    padding: 0 7px 3px;
    background: #8d8d8d;
    border: 1px solid #6a6a6a;
    border-bottom: none;
`;

const UvTitle = styled.header`
    display: flex;
    align-items: flex-start;
    height: 29px;

    h2 {
        flex: 1;
        margin: 0;
        padding-left: 81px;
        font-weight: 400;
        font-size: 14px;
        line-height: 28px;
        text-align: center;
        color: #3a3a3a;
    }

    button:last-child {
        width: 45px;
    }
`;

const SmallLogo = styled.span`
    display: flex;
    width: 16px;
    height: 16px;
    margin: 6px 0 0 2px;
    border-radius: 2px;
    background: #26464c;
`;

const UvMenu = styled.nav`
    display: flex;
    height: 20px;
    padding-left: 1px;
    background: #fdfbff;
    color: #111;
`;

const MenuAnchor = styled.div`
    position: relative;
`;

const MenuItem = styled.button`
    height: 20px;
    padding: 0 6px;
    color: #111;
    ${p => p.$open && css`
        background: #b5d5f9;
        box-shadow: inset 0 0 0 1px #7fb0e6;
    `}
`;

const Popup = styled.div`
    position: absolute;
    z-index: 2;
    left: 0;
    top: 20px;
    width: 190px;
    padding: 1px 2px 2px;
    background: linear-gradient(90deg, #fdf9fd 29px, #ddd8dd 29px, #ddd8dd 30px, #fdf9fb 30px);
    border: 1px solid #8c8c8c;
    box-shadow: 2px 2px 2px #0006;

    button {
        display: block;
        width: 100%;
        height: 22px;
        padding-left: 32px;
        text-align: left;
        color: #222;
    }

    button:first-child {
        background: #d3e8fc;
        box-shadow: inset 0 0 0 1px #82acdb;
    }

    hr {
        margin: 3px 0 3px 30px;
        border: none;
        border-top: 1px solid #ddd;
    }
`;

const Cursor = styled.svg`
    position: absolute;
    z-index: 3;
    left: 40px;
    top: 31px;
    pointer-events: none;
`;

const UvToolbar = styled.div`
    display: flex;
    align-items: center;
    height: 30px;
    padding: 2px 0 0 1px;
    background: #414141;
`;

const UvToolbarEnd = styled.div`
    display: flex;
    align-items: center;
    margin-left: auto;
    padding-right: 16px;
    font-size: 15px;
`;

const UvBody = styled.div`
    display: flex;
    flex: 1;
    min-height: 0;
`;

const Canvas = styled.div`
    flex: 1;
    min-width: 0;
    padding: 51px 0 0 15px;
    background: #767676;
    border-left: 2px solid #111;
    overflow: hidden;

    svg {
        display: block;
        border: 2px solid #545454;
    }
`;

const Rollouts = styled.aside`
    display: flex;
    flex-direction: column;
    gap: 6px;
    flex: none;
    width: 161px;
    padding: 4px 2px 0;
    background: #414141;
    border-left: 2px solid #222;
    border-top: 1px solid #222;

    &::after {
        content: "";
        border-top: 1px solid #666;
    }
`;

const RolloutBox = styled.section`
    border: solid #1a1a1a;
    border-width: 0 1px 1px;
`;

const RolloutHead = styled.h3`
    display: grid;
    grid-template-columns: 12px 1fr 12px;
    height: 18px;
    margin: 0 2px;
    padding: 0 3px;
    border: 1px solid #646464;
    font-weight: 400;
    font-size: 11px;
    line-height: 15px;
    text-align: center;
    color: #e2e2e2;
`;

const RolloutBody = styled.div`
    height: ${p => p.$h}px;
`;

function Rollout({ title, height, children }) {
    return <RolloutBox>
        <RolloutHead><span>-</span>{title}</RolloutHead>
        <RolloutBody $h={height}>{children}</RolloutBody>
    </RolloutBox>;
}

const IconRow = styled.div`
    display: flex;
    flex: none;
    justify-content: center;
    align-items: center;
    height: 30px;
`;

const ShapeRow = styled(IconRow)`
    padding-left: 8px;
`;

const Transforms = styled.div`
    display: grid;
    grid-template-columns: 32px 29px 28px 29px 1px 32px;
    grid-template-rows: 31px 31px;
    align-items: center;

    > :first-child {
        grid-row: 1 / 3;
    }
`;

const Rule = styled.i`
    grid-row: 1 / 3;
    grid-column: 5;
    align-self: stretch;
    margin: 3px 0;
    background: #666;
`;

const Group = styled.fieldset`
    min-width: 0;
    height: 49px;
    margin: 0 ${p => p.$m}px;
    padding: 0;
    border: 1px solid #1c1c1c;

    legend {
        margin-left: 5px;
        padding: 0 2px;
        font-size: 11px;
        line-height: 14px;
    }
`;

const Arrange = styled.div`
    display: flex;
    height: 100%;
    padding: 4px 5px 3px 4px;
    gap: 8px;
`;

const IconColumn = styled.div`
    display: flex;
    flex-direction: column;
    justify-content: center;
    gap: 4px;
`;

const ArrangeBox = styled.div`
    display: flex;
    flex: 1;
    padding-left: 3px;
    gap: 9px;
    border: 1px solid #1c1c1c;
`;

const Options = styled.div`
    display: flex;
    flex-direction: column;
    padding-top: 4px;
    font-size: 11px;
`;

const Check = styled.label`
    display: flex;
    align-items: center;
    gap: 7px;
    height: 21px;

    input {
        width: 12px;
        height: 12px;
        appearance: none;
        background: #4c4c4c;
        border: solid #161616;
        border-width: 2px 0 0 2px;
    }

    input:checked::after {
        content: "✓";
        display: block;
        font: 700 11px/10px "DejaVu Sans", sans-serif;
        color: #fff;
    }
`;

const BottomBar = styled.div`
    display: flex;
    align-items: center;
    height: 30px;
    padding-left: 1px;
    background: #434343;
    border-top: 1px solid #5e5e5e;
`;

const BarSpace = styled.span`
    width: ${p => p.$w}px;
    align-self: stretch;
    border-right: 1px solid #686868;
`;

const Field = styled.label`
    width: 24px;
    padding-left: 5px;
    font-size: 11px;
    color: #bbb;
`;

const AxisLabel = styled.span`
    font-size: 15px;
    color: #e0e0e0;
`;

const islands = [
    "0,177 150,193 162,265 0,265",
    "180,152 341,160 362,255 185,258",
    "10,276 161,272 161,367 0,365",
    "180,296 266,278 266,367 168,366",
    "17,395 177,374 175,482 0,482",
    "209,392 296,375 295,482 184,482",
];

function Checkerboard() {
    return <svg width="488" height="488" viewBox="0 0 484 484" aria-label="Texture space">
        <defs>
            <pattern id="checks" width="48.4" height="48.4" patternUnits="userSpaceOnUse">
                <rect width="48.4" height="48.4" fill="#cbcbcb" />
                <rect width="24.2" height="24.2" fill="#606060" />
                <rect x="24.2" y="24.2" width="24.2" height="24.2" fill="#606060" />
                <path d="M0 0H48.4M0 24.2H48.4M0 0V48.4M24.2 0V48.4" stroke="#999" strokeWidth="1" />
            </pattern>
            <pattern id="mesh" x="2" y="2" width="8.067" height="8.067" patternUnits="userSpaceOnUse">
                <rect width="8.067" height="8.067" fill="#ff90c0" fillOpacity=".1" />
                <path d="M0 .5H8.067M.5 0V8.067" stroke="#e83830" strokeOpacity=".85" />
            </pattern>
        </defs>
        <rect width="484" height="484" fill="url(#checks)" />
        {islands.map(points => <polygon key={points} points={points} fill="url(#mesh)" stroke="#e01014" strokeWidth="2" />)}
        <path d="M162 317H202M180 300V335M177 314H183V320H177Z" stroke="#e8703c" fill="none" />
    </svg>;
}

const floorRows = Array.from({ length: 13 }, (_, i) => i / 12);
const floorColumns = Array.from({ length: 9 }, (_, i) => i);

function SceneDrawing() {
    return <Scene width="409" height="447" viewBox="46 171 409 447" aria-hidden="true">
        <g stroke="#a4a4a4" strokeWidth=".8">
            {floorRows.map(t => <path key={t} d={`M${355 - 34 * t} ${447 + 74 * t}L422 ${449 + 74 * t}`} />)}
            {floorColumns.map(i => <path key={i} d={`M${355 + 11 * i} 447L${321 + 13 * i} 522`} />)}
        </g>
        <path d="M340 482L420 483M417 484L407 522" stroke="#000" strokeWidth="1.4" />
        <path d="M449 285L417 385L418 448L421 522L455 521V285Z" fill="#cf6277" />
        <path d="M455 275L326 329L408 435M426 286L455 323" stroke="#b9b865" fill="none" />
        <path d="M408 435L455 495" stroke="#e0a070" />
        <path d="M449 285L417 385L418 448L421 522L455 520M417 385L455 388" stroke="#34d22c" strokeWidth="1.4" fill="none" />
        <path d="M438 302L446 284H455M419 347L410 372H455M410 372L411 412M416 491L418 528H455" stroke="#fff" fill="none" />
        <path d="M72 559V593" stroke="#2020c0" />
        <path d="M73 593H97" stroke="#a01020" />
        <text x="73" y="565" fontSize="9" fill="#3030a0">z</text>
        <text x="74" y="578" fontSize="9" fill="#1c8030">y</text>
        <text x="97" y="588" fontSize="9" fill="#901828">x</text>
    </Scene>;
}

const frames = Array.from({ length: 60 }, (_, i) => i);

function TimeRuler() {
    return <svg width="600" height="25" aria-label="Track bar" fontSize="11" fill="#b8b8b8" textAnchor="middle">
        <rect width="600" height="25" fill="#303030" />
        <rect x="1" y="1" width="7" height="24" fill="#8f8720" />
        {frames.map(f => <g key={f}>
            <path d={`M${4 + f * 9.4} 0V12`} stroke="#777" />
            {f % 5 === 0 && <text x={4 + f * 9.4} y="22" fill={f ? "#b8b8b8" : "#e0d838"}>{f}</text>}
        </g>)}
    </svg>;
}

const toolStacks = [
    ["box", "lattice", "cylinder", "sphere"],
    ["bulb", "sun", "skylight"],
    ["hook", "cage", "particles"],
    ["spline", "circle", "rect", "letters"],
];

const modifiers = [
    "Unwrap UVW", "Symmetry",
    "Optimizer", "Projection",
    "FFD 3x3x3", "TurboSmooth",
    "Edit Poly", "Displace",
    "Edit Normals", "Bend",
];

function Main() {
    return <MainWindow>
        <Caption>
            <AppButton type="button" aria-label="Application menu">
                <Icon name="swirl" size={28} />
                <svg width="8" height="6" aria-hidden="true"><path d="M0 0H8L4 5Z" fill="#021c1a" /></svg>
            </AppButton>
            <TitleRow>
                <QuickAccess>
                    <IconTool name="page" size={18} w={25} h={22} />
                    <IconTool name="folder" size={18} w={24} h={22} />
                    <IconTool name="save" size={18} w={24} h={22} />
                    <IconTool name="undo" size={18} w={24} h={22} />
                    <IconTool name="caret" size={16} w={12} h={22} />
                    <IconTool name="redo" size={18} w={24} h={22} />
                    <IconTool name="caret" size={16} w={12} h={22} />
                    <IconTool name="project" size={18} w={24} h={22} />
                    <IconTool name="caretBar" size={14} w={16} h={22} />
                </QuickAccess>
                <MainTitle><span>Autodesk 3ds Max  2012 x64</span><span>- Student Version</span><span>    Leaf09_temptemp.max</span></MainTitle>
                <InfoCenter>
                    <IconTool name="caretRight" size={14} w={15} h={16} />
                    <input aria-label="Search" />
                    <IconTool name="binoculars" size={18} w={24} h={20} />
                    <IconTool name="head" size={18} w={24} h={20} />
                    <IconTool name="dish" size={18} w={26} h={20} />
                    <IconTool name="star" size={18} w={24} h={20} />
                    <IconTool name="help" size={18} w={44} h={20} />
                </InfoCenter>
                <CaptionButtons />
            </TitleRow>
            <MainMenu>
                {["Edit", "Tools", "Group", "Views", "Create", "Modifiers", "Animation"].map(m => <button type="button" key={m}>{m}</button>)}
            </MainMenu>
        </Caption>
        <MainToolbar>
            <IconTool name="link" size={22} w={32} />
            <IconTool name="unlink" size={22} w={32} />
            <IconTool name="bind" size={24} w={32} />
            <Divider $dark $gap={2} />
            <DropDown label="Selection filter" value="All" $w={68} />
            <IconTool name="selectObject" w={30} h={29} on />
            <IconTool name="selectName" w={34} />
            <IconTool name="region" w={32} flyout />
            <IconTool name="windowRegion" w={32} />
            <Divider $dark $gap={2} />
            <IconTool name="move" w={32} />
            <IconTool name="rotate" size={22} w={32} />
            <IconTool name="scale" size={22} w={33} flyout />
            <DropDown label="Reference coordinate system" value="View" $w={68} />
            <ToolbarEnd>
                <IconTool name="renderSetup" w={32} />
                <IconTool name="teapotFrame" w={32} />
                <IconTool name="teapot" w={38} flyout />
            </ToolbarEnd>
            <span>AutoBak</span>
        </MainToolbar>
        <Ribbon>
            <RibbonTabs>
                {["Graphite Modeling Tools", "Freeform", "Selection", "Object Paint"].map(t => <button type="button" key={t}>{t}</button>)}
            </RibbonTabs>
            <RibbonPanels>
                <button type="button">Paint Objects</button>
                <button type="button">Brush Settings</button>
            </RibbonPanels>
            <MacroBar>
                {["Select Similar", "Box Spheres", "Reset Poly", "Center Pivots", "Face Planar", "Flatten Wrap", "Bound"].map(m => <button type="button" key={m}>{m}</button>)}
            </MacroBar>
        </Ribbon>
        <Workspace>
            <LeftTools>
                {toolStacks.map(names => <ToolStack key={names[0]}>
                    {names.map(n => <IconTool key={n} name={n} size={22} h={31} />)}
                </ToolStack>)}
                <ToolStack />
            </LeftTools>
            <Center>
                <Viewport>
                    <SceneDrawing />
                    [ + ] [ <em>Perspective</em> ] [ Realistic ]
                    <Stats>
                        <tbody>
                            <tr><th></th><th>Total</th></tr>
                            <tr><th>Polys:</th><td>2,934</td></tr>
                            <tr><th>Verts:</th><td>3,436</td></tr>
                            <tr><th></th><td></td></tr>
                            <tr><th>FPS:</th><td>146.935</td></tr>
                        </tbody>
                    </Stats>
                </Viewport>
                <TimeSlider>
                    <button type="button">&lt;</button>
                    <button type="button">0 / 100</button>
                    <button type="button">&gt;</button>
                </TimeSlider>
                <Track>
                    <Icon name="trackBar" size={20} />
                    <TimeRuler />
                </Track>
            </Center>
            <CommandPanel>
                <PanelTabs>
                    <IconTool name="hierarchy" size={20} w={26} />
                    <Divider $dark $gap={1} />
                    <IconTool name="motion" size={20} w={26} />
                    <Divider $dark $gap={1} />
                    <IconTool name="display" size={20} w={24} />
                    <Divider $dark $gap={1} />
                    <IconTool name="hammer" size={20} w={26} />
                </PanelTabs>
                <NameRow>
                    <input aria-label="Object name" />
                    <button type="button" aria-label="Object colour" />
                </NameRow>
                <ListRow><DropDown label="Modifier list" value="Modifier List" $w={172} $dark /></ListRow>
                <ModifierButtons>
                    {modifiers.map(m => <button type="button" key={m}>{m}</button>)}
                </ModifierButtons>
                <Stack>
                    <li>Unwrap UVW</li>
                    <li>Editable Poly</li>
                </Stack>
                <StackTools>
                    <Divider $dark />
                    <IconTool name="unique" size={18} w={22} />
                    <IconTool name="trash" size={16} w={22} />
                    <Divider $dark />
                    <IconTool name="configure" size={18} w={24} />
                </StackTools>
                <EditRollout>
                    <ScrollBox>
                        <h2>Edit UVs</h2>
                        <WideButton type="button" $indent={37}>Open UV Editor ...</WideButton>
                        <WideButton type="button" $indent={48}>Tweak In View</WideButton>
                        <ShapeRow>
                            <IconTool name="cone" size={22} />
                            <IconTool name="brain" size={22} on />
                            <IconTool name="openX" size={22} />
                        </ShapeRow>
                    </ScrollBox>
                </EditRollout>
            </CommandPanel>
        </Workspace>
        <Footer>
            <Listener>
                <input aria-label="Macro recorder" defaultValue="$Box001.modifiers[#unwrap_uvw].unwrap6.selec" />
                <input aria-label="Script output" defaultValue="Initial Clusters 6 finalClusters 6" />
            </Listener>
            <Status>
                <div>1 Object Selected <Icon name="lock" size={16} /></div>
                <div>Select texture vertices</div>
            </Status>
            <NavTools>
                {["toEnd", "zoom", "zoomAll", "extents", "extentsAll", "keyTime", "fov", "hand", "orbit", "maximize"].map(n => <IconTool key={n} name={n} size={18} w={23} h={24} />)}
            </NavTools>
        </Footer>
    </MainWindow>;
}

const selectionTools = ["growSel", "shrinkSel", "loop", "loopGrow", "loopShrink", "ring", "ringGrow", "ringShrink", "brush", "brushBig", "brushSmall"];

function UvEditor() {
    return <UvWindow>
        <UvTitle>
            <SmallLogo><Icon name="swirl" size={16} /></SmallLogo>
            <h2>Edit UVWs</h2>
            <CaptionButtons />
        </UvTitle>
        <UvMenu>
            {["File", "Edit", "Select", "Tools"].map(m => <MenuItem type="button" key={m}>{m}</MenuItem>)}
            <MenuAnchor>
                <MenuItem type="button" $open>Mapping</MenuItem>
                <Popup>
                    <button type="button">Flatten Mapping...</button>
                    <hr />
                    <button type="button">Normal Mapping...</button>
                    <button type="button">Unfold Mapping...</button>
                </Popup>
                <Cursor width="14" height="20" viewBox="0 0 14 20" aria-hidden="true">
                    <path d="M1 1V16L4 13L7 19L10 18L7 12H12Z" fill="#fff" stroke="#333" />
                </Cursor>
            </MenuAnchor>
            {["Options", "Display", "View"].map(m => <MenuItem type="button" key={m}>{m}</MenuItem>)}
        </UvMenu>
        <UvToolbar>
            <IconTool name="uvMove" on />
            <IconTool name="rotate" size={22} />
            <IconTool name="uvScale" flyout />
            <IconTool name="uvFree" size={22} />
            <Divider $gap={4} />
            <IconTool name="mirror" flyout />
            <UvToolbarEnd>
                <IconTool name="checkerCube" on />
                <Tool type="button" $flyout>UV</Tool>
                <IconTool name="list" />
                <DropDown label="Texture" value={"CheckerPattern\u00a0 ( Checker )"} $w={168} $sans />
            </UvToolbarEnd>
        </UvToolbar>
        <UvBody>
            <Canvas><Checkerboard /></Canvas>
            <Rollouts>
                <Rollout title="Quick Transform" height={66}>
                    <Transforms>
                        <IconTool name="pivot" size={22} flyout />
                        <IconTool name="alignH" flyout />
                        <IconTool name="alignEdge" size={22} />
                        <IconTool name="turnCw" size={22} />
                        <Rule />
                        <IconTool name="spaceH" />
                        <IconTool name="alignV" flyout />
                        <IconTool name="straighten" size={22} />
                        <IconTool name="turnCcw" size={22} />
                        <IconTool name="spaceV" />
                    </Transforms>
                </Rollout>
                <Rollout title="Reshape Elements" height={36}>
                    <ShapeRow>
                        <IconTool name="straightenSel" size={22} />
                        <IconTool name="relax" size={22} />
                        <IconTool name="relaxDialog" size={22} flyout />
                    </ShapeRow>
                </Rollout>
                <Rollout title="Stitch" height={36}>
                    <IconRow>
                        <IconTool name="stitchTarget" />
                        <IconTool name="stitchAverage" />
                        <IconTool name="stitchSource" />
                        <IconTool name="stitchCustom" size={22} flyout />
                    </IconRow>
                </Rollout>
                <Rollout title="Explode" height={84}>
                    <IconRow>
                        <IconTool name="breakWall" />
                        <IconTool name="flatPoly" />
                        <IconTool name="flatSmooth" />
                        <IconTool name="flatMat" />
                        <IconTool name="flatCustom" flyout />
                    </IconRow>
                    <Group $m={6}>
                        <legend>Weld</legend>
                        <IconRow>
                            <IconTool name="target" />
                            <IconTool name="weldSel" />
                            <IconTool name="weldAll" />
                            <IconTool name="weldPick" />
                        </IconRow>
                    </Group>
                </Rollout>
                <Rollout title="Peel" height={84}>
                    <IconRow>
                        <IconTool name="quickPeel" />
                        <IconTool name="peelMode" />
                        <IconTool name="resetPeel" />
                    </IconRow>
                    <Group $m={11}>
                        <legend>Pins:</legend>
                        <IconRow>
                            <IconTool name="pin" />
                            <IconTool name="unpin" />
                            <IconTool name="autoPin" on />
                            <Divider $gap={4} />
                            <IconTool name="pinCursor" />
                        </IconRow>
                    </Group>
                </Rollout>
                <Rollout title="Arrange Elements" height={93}>
                    <Arrange>
                        <IconColumn>
                            <IconTool name="packCustom" flyout />
                            <IconTool name="packFull" />
                        </IconColumn>
                        <ArrangeBox>
                            <IconColumn>
                                <IconTool name="packTogether" />
                                <IconTool name="packFit" />
                            </IconColumn>
                            <Options>
                                <Check><input type="checkbox" defaultChecked />Rescale</Check>
                                <Check><input type="checkbox" />Rotate</Check>
                                <label htmlFor="padding">Padding:</label>
                                <Spinner id="padding" label="Padding" value="0.02" w={36} />
                            </Options>
                        </ArrangeBox>
                    </Arrange>
                </Rollout>
            </Rollouts>
        </UvBody>
        <BottomBar>
            <IconTool name="vertex" />
            <IconTool name="edge" />
            <IconTool name="polygon" on />
            <Divider />
            <IconTool name="cubeFlat" />
            <Divider />
            {selectionTools.map(n => <IconTool key={n} name={n} />)}
            <BarSpace $w={14} />
            <IconTool name="softSun" w={34} />
            <Spinner label="Falloff" value="0.0" w={37} />
            <IconTool name="slash" w={34} size={22} flyout />
            <Tool type="button" $flyout><AxisLabel>XY</AxisLabel></Tool>
            <Divider $gap={4} />
            <IconTool name="ruler" on />
            <Divider $gap={1} />
            <Spinner label="Falloff rings" value="16" w={20} />
        </BottomBar>
        <BottomBar>
            <IconTool name="absolute" size={22} />
            <Divider $gap={4} />
            <Field htmlFor="u">U:</Field>
            <Spinner id="u" label="U" w={28} />
            <Field htmlFor="v">V:</Field>
            <Spinner id="v" label="V" w={28} />
            <Field htmlFor="w">W:</Field>
            <Spinner id="w" label="W" value="0.0" w={28} />
            <Divider $gap={8} />
            <BarSpace $w={15} />
            <IconTool name="padlock" size={22} />
            <IconTool name="hide" size={22} />
            <Divider $gap={4} />
            <IconTool name="lamp" size={20} flyout />
            <IconTool name="snow" size={20} flyout />
            <Divider $gap={4} />
            <DropDown label="Material IDs" value="All IDs" $w={137} $sans />
            <IconTool name="hand" size={22} />
            <IconTool name="zoom" size={22} />
            <IconTool name="zoomRegion" size={22} />
            <IconTool name="zoomExtents" size={22} flyout />
            <IconTool name="snap" size={22} flyout />
        </BottomBar>
    </UvWindow>;
}

function App() {
    return <>
        <GlobalStyle />
        <Main />
        <UvEditor />
    </>;
}

export default App;
